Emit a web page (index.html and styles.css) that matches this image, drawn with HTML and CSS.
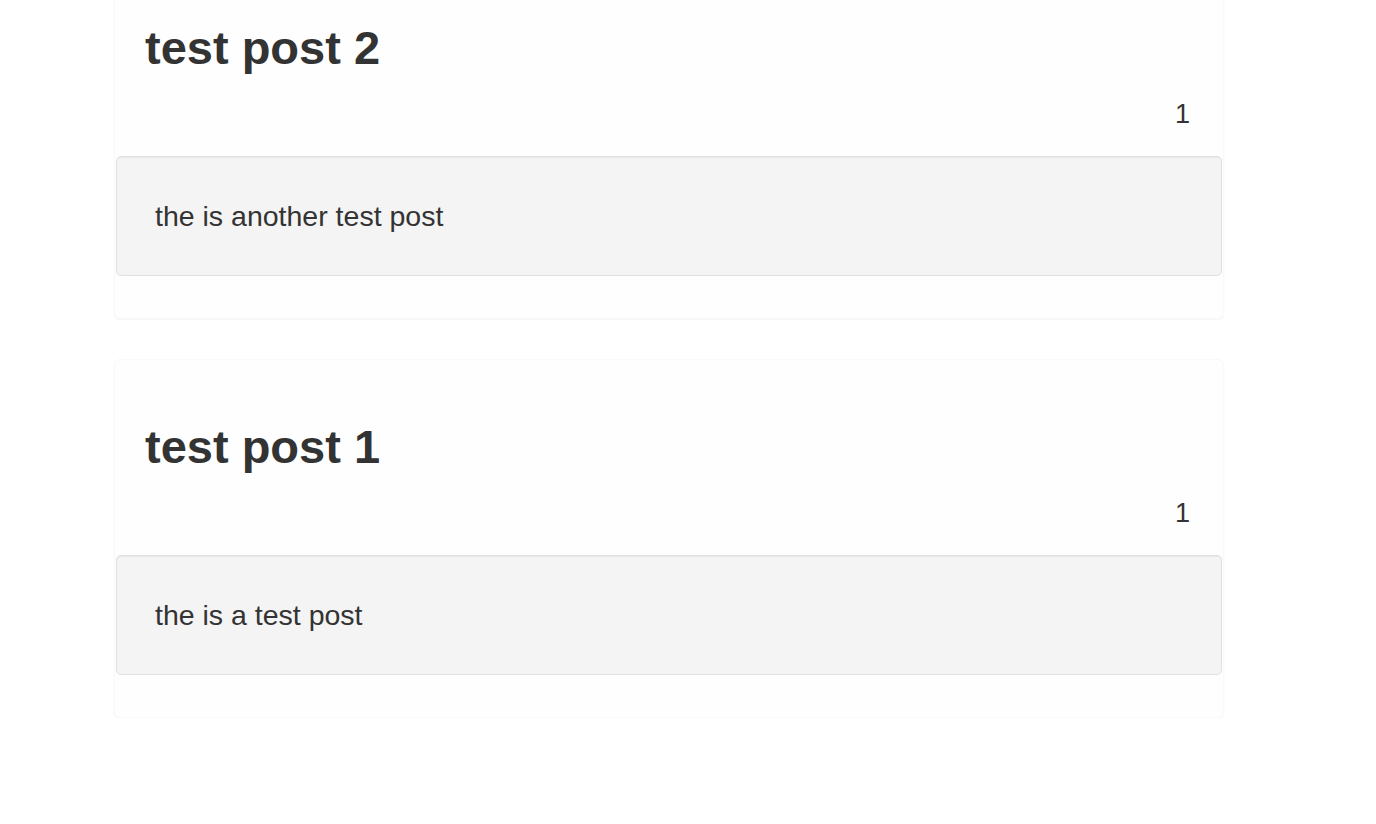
FILE: index.html
```html
<!DOCTYPE html>
<html>
<head>
<meta charset="utf-8">
<title>Posts</title>
<link rel="stylesheet" href="styles.css">
</head>
<body>
<div class="feed">
  <div class="post">
    <h1 class="post-title">test post 2</h1>
    <div class="post-count">1</div>
    <div class="well">the is another test post</div>
  </div>
  <div class="post">
    <h1 class="post-title">test post 1</h1>
    <div class="post-count">1</div>
    <div class="well">the is a test post</div>
  </div>
</div>
</body>
</html>
```
FILE: styles.css
```css
html, body {
  margin: 0;
  padding: 0;
  background: #ffffff;
}
body {
  font-family: "Liberation Sans", Arial, Helvetica, sans-serif;
  color: #333333;
}
.feed {
  width: 1110px;
  margin: -40px 0 0 114px;
  display: flex;
  flex-direction: column;
  gap: 40px;
}
.post {
  background: #fefefe;
  border: 1px solid #f9f9f9;
  border-radius: 6px;
  box-shadow: 0 1px 2px rgba(0, 0, 0, 0.045);
  padding: 62px 1px 42px 1px;
}
.post-title {
  margin: 0;
  padding: 0 29px;
  font-size: 47px;
  line-height: 50px;
  font-weight: 700;
  color: #333333;
}
.post-count {
  margin-top: 26px;
  padding: 0 32px;
  text-align: right;
  font-size: 27px;
  line-height: 30px;
}
.well {
  margin-top: 27px;
  background: #f4f4f4;
  border: 1px solid #e0e0e0;
  border-radius: 5px;
  box-shadow: inset 0 1px 1px rgba(0, 0, 0, 0.05);
  padding: 44px 38px 44px 38px;
  font-size: 28.5px;
  line-height: 30px;
}
```
